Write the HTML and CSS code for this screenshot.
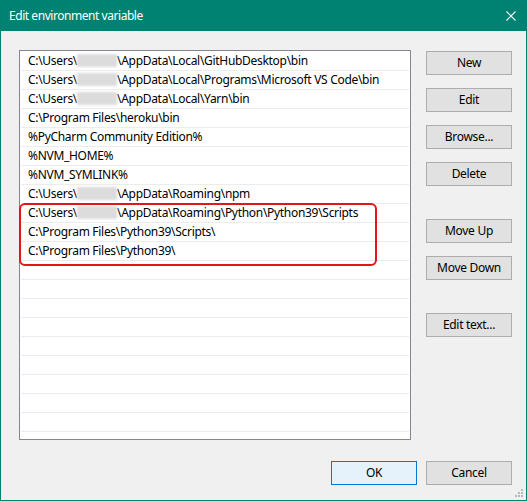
FILE: index.html
```html
<!DOCTYPE html>
<html>
<head>
<meta charset="utf-8">
<link rel="stylesheet" href="styles.css">
</head>
<body>
<div class="window">
  <div class="titlebar">
    <span class="title">Edit environment variable</span>
    <svg class="close" width="10" height="10" viewBox="0 0 10 10"><path d="M0.5 0.5 L9.5 9.5 M9.5 0.5 L0.5 9.5" stroke="#fff" stroke-width="1.1" fill="none"/></svg>
  </div>
  <div class="content">
    <div class="main">
      <div class="listbox">
        <div class="row">C:\Users\<span class="redact"></span>\AppData\Local\GitHubDesktop\bin</div>
        <div class="row">C:\Users\<span class="redact"></span>\AppData\Local\Programs\Microsoft VS Code\bin</div>
        <div class="row">C:\Users\<span class="redact"></span>\AppData\Local\Yarn\bin</div>
        <div class="row">C:\Program Files\heroku\bin</div>
        <div class="row">%PyCharm Community Edition%</div>
        <div class="row">%NVM_HOME%</div>
        <div class="row">%NVM_SYMLINK%</div>
        <div class="row">C:\Users\<span class="redact"></span>\AppData\Roaming\npm</div>
        <div class="row">C:\Users\<span class="redact"></span>\AppData\Roaming\Python\Python39\Scripts</div>
        <div class="row">C:\Program Files\Python39\Scripts\</div>
        <div class="row">C:\Program Files\Python39\</div>
        <div class="row"></div>
        <div class="row"></div>
        <div class="row"></div>
        <div class="row"></div>
        <div class="row"></div>
        <div class="row"></div>
        <div class="row"></div>
        <div class="row"></div>
        <div class="row"></div>
      </div>
      <div class="buttons">
        <div class="btn">New</div>
        <div class="btn">Edit</div>
        <div class="btn">Browse...</div>
        <div class="btn">Delete</div>
        <div class="btn gap-lg">Move Up</div>
        <div class="btn">Move Down</div>
        <div class="btn gap-lg">Edit text...</div>
      </div>
    </div>
    <div class="footer">
      <div class="btn primary">OK</div>
      <div class="btn">Cancel</div>
    </div>
  </div>
  <div class="highlight"></div>
  <svg class="grip" width="9" height="8" viewBox="0 0 9 8">
    <g fill="#b9b9b9">
      <rect x="6" y="0" width="2" height="2"/>
      <rect x="3" y="3" width="2" height="2"/>
      <rect x="6" y="3" width="2" height="2"/>
      <rect x="0" y="6" width="2" height="2"/>
      <rect x="3" y="6" width="2" height="2"/>
      <rect x="6" y="6" width="2" height="2"/>
    </g>
  </svg>
</div>
</body>
</html>
```
FILE: styles.css
```css
html, body {
  margin: 0;
  padding: 0;
  background: #f0f0f0;
}
body {
  font-family: "Noto Sans", "Liberation Sans", sans-serif;
  font-size: 12px;
  letter-spacing: -0.3px;
  color: #000;
}
.window {
  position: relative;
  width: 527px;
  height: 501px;
  box-sizing: border-box;
  border: 1px solid #008272;
  background: #f0f0f0;
}
.titlebar {
  height: 30px;
  background: #008272;
  display: flex;
  align-items: center;
  justify-content: space-between;
  padding: 0 10px 0 8px;
}
.title {
  color: #fff;
  font-size: 12px;
  letter-spacing: -0.45px;
  line-height: 16px;
}
.close {
  display: block;
  margin-top: -1px;
}
.content {
  padding: 19px 14px 0 18px;
}
.main {
  display: flex;
  align-items: flex-start;
}
.listbox {
  width: 392px;
  height: 390px;
  box-sizing: border-box;
  border: 1px solid #828790;
  background: #fff;
  padding-top: 1px;
  overflow: hidden;
}
.row {
  height: 18px;
  line-height: 18px;
  margin: 0 1px;
  padding-left: 7px;
  border-bottom: 1px solid #ececec;
  white-space: nowrap;
}
.redact {
  display: inline-block;
  width: 40px;
  height: 13px;
  vertical-align: -2px;
  background: #dcdcdc;
  filter: blur(1.2px);
}
.buttons {
  margin-left: 15px;
  margin-top: 1px;
  display: flex;
  flex-direction: column;
  gap: 13px;
}
.btn {
  width: 86px;
  height: 24px;
  box-sizing: border-box;
  border: 1px solid #adadad;
  background: #e1e1e1;
  display: flex;
  align-items: center;
  justify-content: center;
  line-height: 16px;
}
.gap-lg {
  margin-top: 20px;
}
.footer {
  display: flex;
  justify-content: flex-end;
  gap: 9px;
  margin-top: 21px;
}
.btn.primary {
  border-color: #0078d7;
  background: #e5f1fb;
}
.highlight {
  position: absolute;
  left: 18px;
  top: 202px;
  width: 358px;
  height: 63px;
  box-sizing: border-box;
  border: 2px solid #e3141c;
  border-radius: 6px;
}
.grip {
  position: absolute;
  right: 2px;
  bottom: 3px;
  display: block;
}
```
